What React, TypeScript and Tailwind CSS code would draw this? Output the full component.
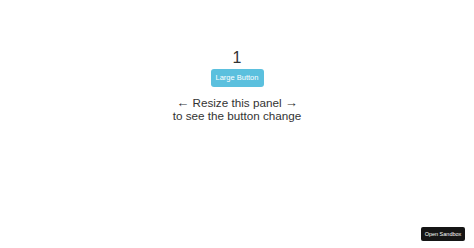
import React from 'react';

export default function App() {
	return (
		<div
			className="relative h-[248px] w-[474px] overflow-hidden bg-white text-[#333]"
			style={{ fontFamily: '"Liberation Sans", Arial, sans-serif' }}
		>
			<div className="flex flex-col items-center pt-[48px]">
				<div className="text-[16px] leading-[20px]">1</div>
				<button className="mt-[1px] h-[18px] w-[53px] rounded-[3px] bg-[#5bc0de] text-[7.5px] text-white">
					Large Button
				</button>
				<div className="mt-[9px] text-center text-[11.7px] leading-[13px]">
					<div>
						<span className="text-[13px]">←</span> Resize this panel{' '}
						<span className="text-[13px]">→</span>
					</div>
					<div>to see the button change</div>
				</div>
			</div>
			<button className="absolute right-[9px] bottom-[7px] h-[14px] w-[44px] rounded-[2px] bg-[#151515] text-[5.5px] text-white">
				Open Sandbox
			</button>
		</div>
	);
}
